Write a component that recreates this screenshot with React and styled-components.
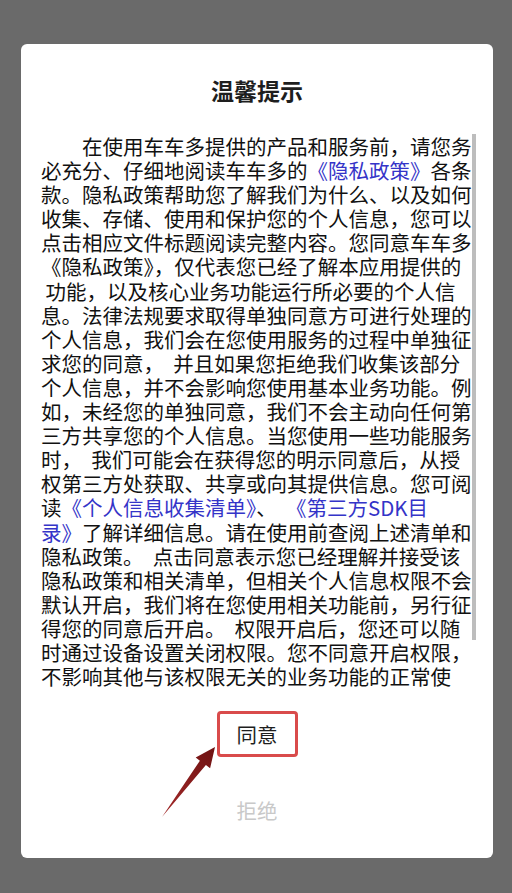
import React from 'react'
import styled, { createGlobalStyle } from 'styled-components'

const GlobalStyle = createGlobalStyle`
    html, body {
        margin: 0;
        padding: 0;
    }
    body {
        background: #6a6a6a;
        font-family: "Noto Sans CJK SC", "Noto Sans", sans-serif;
    }
`

const Overlay = styled.div`
    position: relative;
    height: 893px;
    box-sizing: border-box;
    padding: 44px 19px 35px 21px;
    background: #6a6a6a;
    display: flex;
`
const Card = styled.div`
    flex: 1;
    background: #fff;
    border-radius: 6px;
    display: flex;
    flex-direction: column;
    align-items: center;
    padding-top: 31px;
`
const Title = styled.h2`
    margin: 0;
    font-size: 23px;
    line-height: 30px;
    font-weight: 700;
    color: #1e1e1e;
`
const ScrollArea = styled.div`
    position: relative;
    align-self: stretch;
    margin: 29px 17px 0 20px;
    height: 555px;
    overflow: hidden;
`
const Line = styled.div`
    font-size: 20.5px;
    line-height: 24.1px;
    white-space: pre;
    color: #111;
`
const Link = styled.span`
    color: #3434c8;
`
const Thumb = styled.div`
    position: absolute;
    top: 0;
    right: 0;
    width: 4px;
    height: 506px;
    background: #bdbdbd;
`
const AgreeButton = styled.button`
    margin-top: 22px;
    width: 81px;
    height: 46px;
    box-sizing: border-box;
    border: 3px solid #d94b4b;
    border-radius: 4px;
    background: #fff;
    padding: 0;
    font-family: inherit;
    font-size: 20.5px;
    color: #1e1e1e;
    display: flex;
    align-items: center;
    justify-content: center;
`
const RefuseButton = styled.button`
    margin-top: 38px;
    border: none;
    background: none;
    padding: 0;
    font-family: inherit;
    font-size: 20.5px;
    line-height: 30px;
    color: #c9c9c9;
`
const Pointer = styled.svg`
    position: absolute;
    left: 0;
    top: 0;
    pointer-events: none;
`

// 每一行按原图的折行方式排好
const lines = [
    ['\u3000\u3000在使用车车多提供的产品和服务前，请您务'],
    ['必充分、仔细地阅读车车多的', { link: '《隐私政策》' }, '各条'],
    ['款。隐私政策帮助您了解我们为什么、以及如何'],
    ['收集、存储、使用和保护您的个人信息，您可以'],
    ['点击相应文件标题阅读完整内容。您同意车车多'],
    ['《隐私政策》，仅代表您已经了解本应用提供的'],
    [' 功能，以及核心业务功能运行所必要的个人信'],
    ['息。法律法规要求取得单独同意方可进行处理的'],
    ['个人信息，我们会在您使用服务的过程中单独征'],
    ['求您的同意，  并且如果您拒绝我们收集该部分'],
    ['个人信息，并不会影响您使用基本业务功能。例'],
    ['如，未经您的单独同意，我们不会主动向任何第'],
    ['三方共享您的个人信息。当您使用一些功能服务'],
    ['时，  我们可能会在获得您的明示同意后，从授'],
    ['权第三方处获取、共享或向其提供信息。您可阅'],
    ['读', { link: '《个人信息收集清单》' }, '、  ', { link: '《第三方SDK目' }],
    [{ link: '录》' }, '了解详细信息。请在使用前查阅上述清单和'],
    ['隐私政策。  点击同意表示您已经理解并接受该'],
    ['隐私政策和相关清单，但相关个人信息权限不会'],
    ['默认开启，我们将在您使用相关功能前，另行征'],
    ['得您的同意后开启。  权限开启后，您还可以随'],
    ['时通过设备设置关闭权限。您不同意开启权限，'],
    ['不影响其他与该权限无关的业务功能的正常使'],
    ['用。'],
]

const App = () => {
    return (
        <>
            <GlobalStyle />
            <Overlay>
                <Card>
                    <Title>温馨提示</Title>
                    <ScrollArea>
                        {lines.map((parts, i) => (
                            <Line key={i}>
                                {parts.map((p, j) =>
                                    typeof p === 'string' ? p : <Link key={j}>{p.link}</Link>
                                )}
                            </Line>
                        ))}
                        <Thumb />
                    </ScrollArea>
                    <AgreeButton>同意</AgreeButton>
                    <RefuseButton>拒绝</RefuseButton>
                </Card>
                <Pointer width="512" height="893" viewBox="0 0 512 893">
                    <defs>
                        <linearGradient id="arrowFill" x1="162" y1="817" x2="215" y2="747" gradientUnits="userSpaceOnUse">
                            <stop offset="0" stopColor="#a42a2a" />
                            <stop offset="1" stopColor="#6e1111" />
                        </linearGradient>
                    </defs>
                    <polygon
                        points="215,747 195.7,757.5 199.9,760.7 162,817 205.9,765.1 210.1,768.3"
                        fill="url(#arrowFill)"
                    />
                </Pointer>
            </Overlay>
        </>
    )
}

export default App
